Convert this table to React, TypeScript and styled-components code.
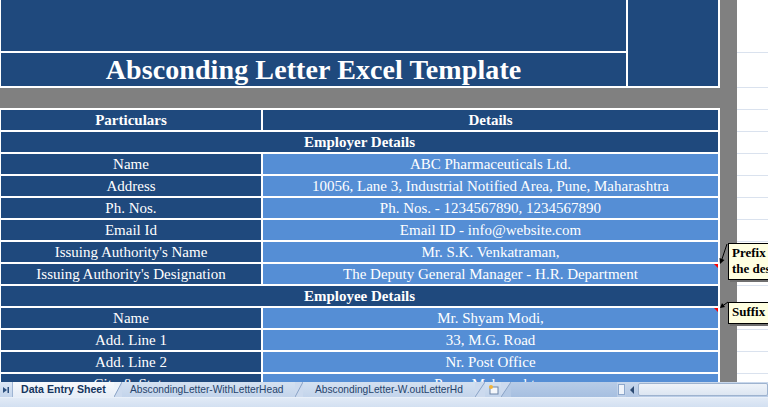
import React from 'react';
import styled, { createGlobalStyle } from 'styled-components';

const NAVY = '#1f497d';
const LIGHT = '#558ed5';
const GRAY = '#808080';

const Global = createGlobalStyle`
  html, body { margin: 0; padding: 0; background: #ffffff; }
  body { width: 768px; height: 407px; overflow: hidden; }
`;

const Window = styled.div`
  position: relative;
  width: 768px;
  height: 407px;
  overflow: hidden;
  display: flex;
  flex-direction: column;
  background: #ffffff;
`;

const Sheet = styled.div`
  flex: none;
  height: 382px;
  display: flex;
  overflow: hidden;
`;

const Content = styled.div`
  flex: none;
  width: 720px;
  display: flex;
  flex-direction: column;
  background: #ffffff;
  & > * { flex: none; }
`;

const Header = styled.div`
  display: grid;
  grid-template-columns: 625px 90px;
  grid-template-rows: 51px 33px;
  gap: 2px;
  padding: 0 2px 2px 1px;
`;

const TopBlock = styled.div`
  background: ${NAVY};
`;

const SideBlock = styled.div`
  background: ${NAVY};
  grid-row: 1 / span 2;
  grid-column: 2;
`;

const Title = styled.h1`
  margin: 0;
  background: ${NAVY};
  color: #ffffff;
  font-family: 'Liberation Serif', 'Times New Roman', serif;
  font-weight: bold;
  font-size: 28px;
  line-height: 33px;
  text-align: center;
  letter-spacing: 0.1px;
`;

const GrayBand = styled.div`
  height: 20px;
  background: ${GRAY};
`;

const Table = styled.div`
  display: grid;
  grid-template-columns: 260px 455px;
  grid-auto-rows: 20px;
  gap: 2px;
  padding: 2px 2px 0 1px;
`;

const Cell = styled.div<{ $tone: 'navy' | 'light'; $bold?: boolean; $span?: boolean; $flag?: boolean }>`
  position: relative;
  background: ${(p) => (p.$tone === 'navy' ? NAVY : LIGHT)};
  color: #ffffff;
  font-family: 'Liberation Serif', 'Times New Roman', serif;
  font-size: 15px;
  font-weight: ${(p) => (p.$bold ? 'bold' : 'normal')};
  line-height: 20px;
  text-align: center;
  white-space: nowrap;
  overflow: hidden;
  grid-column: ${(p) => (p.$span ? '1 / span 2' : 'auto')};
  &::after {
    content: '';
    display: ${(p) => (p.$flag ? 'block' : 'none')};
    position: absolute;
    top: 0;
    right: 0;
    border-top: 4px solid #ff0000;
    border-left: 4px solid transparent;
  }
`;

const GrayStrip = styled.div`
  flex: none;
  width: 17px;
  background: ${GRAY};
`;

const GridArea = styled.div`
  flex: 1;
  display: flex;
  flex-direction: column;
  background: #ffffff;
`;

const GridRow = styled.div<{ $h: number }>`
  flex: none;
  box-sizing: border-box;
  height: ${(p) => p.$h}px;
  border-bottom: 1px solid #dae2ee;
`;

const TabBar = styled.div`
  flex: none;
  height: 15px;
  display: flex;
  align-items: stretch;
  background: linear-gradient(#c9d8ec, #b9cce6);
  font-family: 'Liberation Sans', Arial, sans-serif;
  line-height: 15px;
  white-space: nowrap;
`;

const NavButton = styled.div`
  flex: none;
  width: 12px;
  display: flex;
  align-items: center;
  justify-content: center;
  background: linear-gradient(#dce7f5, #c4d5ec);
  border-right: 1px solid #9fb5d3;
`;

const Tab = styled.div<{ $active?: boolean; $w: number; $pl: number }>`
  flex: none;
  box-sizing: border-box;
  width: ${(p) => p.$w}px;
  padding-left: ${(p) => p.$pl}px;
  overflow: hidden;
  font-size: ${(p) => (p.$active ? '10.6px' : '10.2px')};
  background: ${(p) => (p.$active ? 'linear-gradient(#f7f9fc, #e6edf7)' : 'linear-gradient(#d4e1f1, #c3d4eb)')};
  color: ${(p) => (p.$active ? '#15355e' : '#26436b')};
  font-weight: ${(p) => (p.$active ? 'bold' : 'normal')};
`;

const Slant = styled.svg`
  flex: none;
  display: block;
`;

const InsertTab = styled.div`
  flex: none;
  width: 16px;
  display: flex;
  align-items: center;
  justify-content: center;
  background: linear-gradient(#d4e1f1, #c3d4eb);
`;

const Filler = styled.div`
  flex: 1 1 110px;
  background: linear-gradient(#b8cce7, #a6bfe0);
`;

const SplitBox = styled.div`
  flex: none;
  width: 5px;
  margin: 2px 1px;
  background: #eef3fa;
  border: 1px solid #8ea8cc;
`;

const ArrowButton = styled.div`
  flex: none;
  width: 12px;
  display: flex;
  align-items: center;
  justify-content: center;
  background: linear-gradient(#c9d8ec, #b2c7e4);
`;

const ScrollTrack = styled.div`
  flex: none;
  width: 128px;
  margin: 1px 0;
  background: linear-gradient(#eef3f9, #dde6f2);
  border: 1px solid #9eb3cf;
  border-radius: 2px;
`;

const StatusBand = styled.div`
  flex: 1;
  background: linear-gradient(#e1eaf6, #d3e0f1);
  border-top: 1px solid #e9f0f9;
`;

const CommentBox = styled.div<{ $top: number; $h: number }>`
  position: absolute;
  left: 728px;
  top: ${(p) => p.$top}px;
  width: 80px;
  height: ${(p) => p.$h}px;
  box-sizing: border-box;
  padding: 1px 0 0 3px;
  background: #ffffe1;
  border: 1px solid #000000;
  box-shadow: 2px 2px 0 #6f6f6f;
  font-family: 'Liberation Serif', 'Times New Roman', serif;
  font-weight: bold;
  font-size: 13px;
  line-height: 16px;
  color: #000000;
  white-space: nowrap;
  overflow: hidden;
`;

const Arrows = styled.svg`
  position: absolute;
  left: 712px;
  top: 238px;
  pointer-events: none;
`;

type Row = { left: string; right?: string; kind: 'head' | 'section' | 'data'; flag?: boolean };

const rows: Row[] = [
  { left: 'Particulars', right: 'Details', kind: 'head' },
  { left: 'Employer Details', kind: 'section' },
  { left: 'Name', right: 'ABC Pharmaceuticals Ltd.', kind: 'data' },
  { left: 'Address', right: '10056, Lane 3, Industrial Notified Area, Pune, Maharashtra', kind: 'data' },
  { left: 'Ph. Nos.', right: 'Ph. Nos. - 1234567890, 1234567890', kind: 'data' },
  { left: 'Email Id', right: 'Email ID - info@website.com', kind: 'data' },
  { left: "Issuing Authority's Name", right: 'Mr. S.K. Venkatraman,', kind: 'data' },
  { left: "Issuing Authority's Designation", right: 'The Deputy General Manager - H.R. Department', kind: 'data', flag: true },
  { left: 'Employee Details', kind: 'section' },
  { left: 'Name', right: 'Mr. Shyam Modi,', kind: 'data', flag: true },
  { left: 'Add. Line 1', right: '33, M.G. Road', kind: 'data' },
  { left: 'Add. Line 2', right: 'Nr. Post Office', kind: 'data' },
  { left: 'City & State', right: 'Pune, Maharashtra', kind: 'data' },
];

const gridHeights = [53, 35, 22, ...Array.from({ length: 14 }, () => 22)];

const SlantSep: React.FC<{ w: number; leftFill: string; rightFill: string }> = ({ w, leftFill, rightFill }) => (
  <Slant width={w} height={15} viewBox={`0 0 ${w} 15`}>
    <polygon points={`0,0 ${w},0 0,15`} fill={leftFill} />
    <polygon points={`${w},0 ${w},15 0,15`} fill={rightFill} />
    <line x1={0} y1={15} x2={w} y2={0} stroke="#8aa3c6" strokeWidth={1} />
  </Slant>
);

export default function App() {
  return (
    <Window>
      <Global />
      <Sheet>
        <Content>
          <Header>
            <TopBlock />
            <SideBlock />
            <Title>Absconding Letter Excel Template</Title>
          </Header>
          <GrayBand />
          <Table>
            {rows.map((r, i) =>
              r.kind === 'section' ? (
                <Cell key={i} $tone="navy" $bold $span>
                  {r.left}
                </Cell>
              ) : (
                <React.Fragment key={i}>
                  <Cell $tone="navy" $bold={r.kind === 'head'}>
                    {r.left}
                  </Cell>
                  <Cell $tone={r.kind === 'head' ? 'navy' : 'light'} $bold={r.kind === 'head'} $flag={r.flag}>
                    {r.right}
                  </Cell>
                </React.Fragment>
              )
            )}
          </Table>
        </Content>
        <GrayStrip />
        <GridArea>
          {gridHeights.map((h, i) => (
            <GridRow key={i} $h={h} />
          ))}
        </GridArea>
      </Sheet>
      <TabBar>
        <NavButton>
          <svg width="8" height="8" viewBox="0 0 8 8">
            <polygon points="1,1 5,4 1,7" fill="#2b4f7e" />
            <rect x="5.5" y="1" width="1.5" height="6" fill="#2b4f7e" />
          </svg>
        </NavButton>
        <Tab $active $w={101} $pl={8}>Data Entry Sheet</Tab>
        <SlantSep w={8} leftFill="#eef3fa" rightFill="#ccdaee" />
        <Tab $w={173} $pl={8}>AbscondingLetter-WithLetterHead</Tab>
        <SlantSep w={8} leftFill="#ccdaee" rightFill="#ccdaee" />
        <Tab $w={172} $pl={12}>AbscondingLetter-W.outLetterHd</Tab>
        <SlantSep w={10} leftFill="#ccdaee" rightFill="#ccdaee" />
        <InsertTab>
          <svg width="13" height="11" viewBox="0 0 13 11">
            <rect x="3" y="3" width="8" height="7" fill="#f4f7fb" stroke="#6e86a8" strokeWidth="1" />
            <circle cx="4" cy="3" r="2" fill="#f2b53a" />
          </svg>
        </InsertTab>
        <SlantSep w={10} leftFill="#ccdaee" rightFill="#b4c9e5" />
        <Filler />
        <SplitBox />
        <ArrowButton>
          <svg width="6" height="8" viewBox="0 0 6 8">
            <polygon points="5,0 1,4 5,8" fill="#2d4b73" />
          </svg>
        </ArrowButton>
        <ScrollTrack />
      </TabBar>
      <StatusBand />

      <Arrows width="20" height="80" viewBox="0 0 20 80">
        <line x1="15" y1="6" x2="9" y2="24" stroke="#000" strokeWidth="1" />
        <polygon points="8,26 7.5,20 12.5,22" fill="#000" />
        <line x1="16" y1="64" x2="9" y2="69" stroke="#000" strokeWidth="1" />
        <polygon points="8,70 10,65 13,69" fill="#000" />
      </Arrows>
      <CommentBox $top={243} $h={37}>
        Prefix The name
        <br />
        the designation
      </CommentBox>
      <CommentBox $top={302} $h={22}>
        Suffix the name
      </CommentBox>
    </Window>
  );
}
